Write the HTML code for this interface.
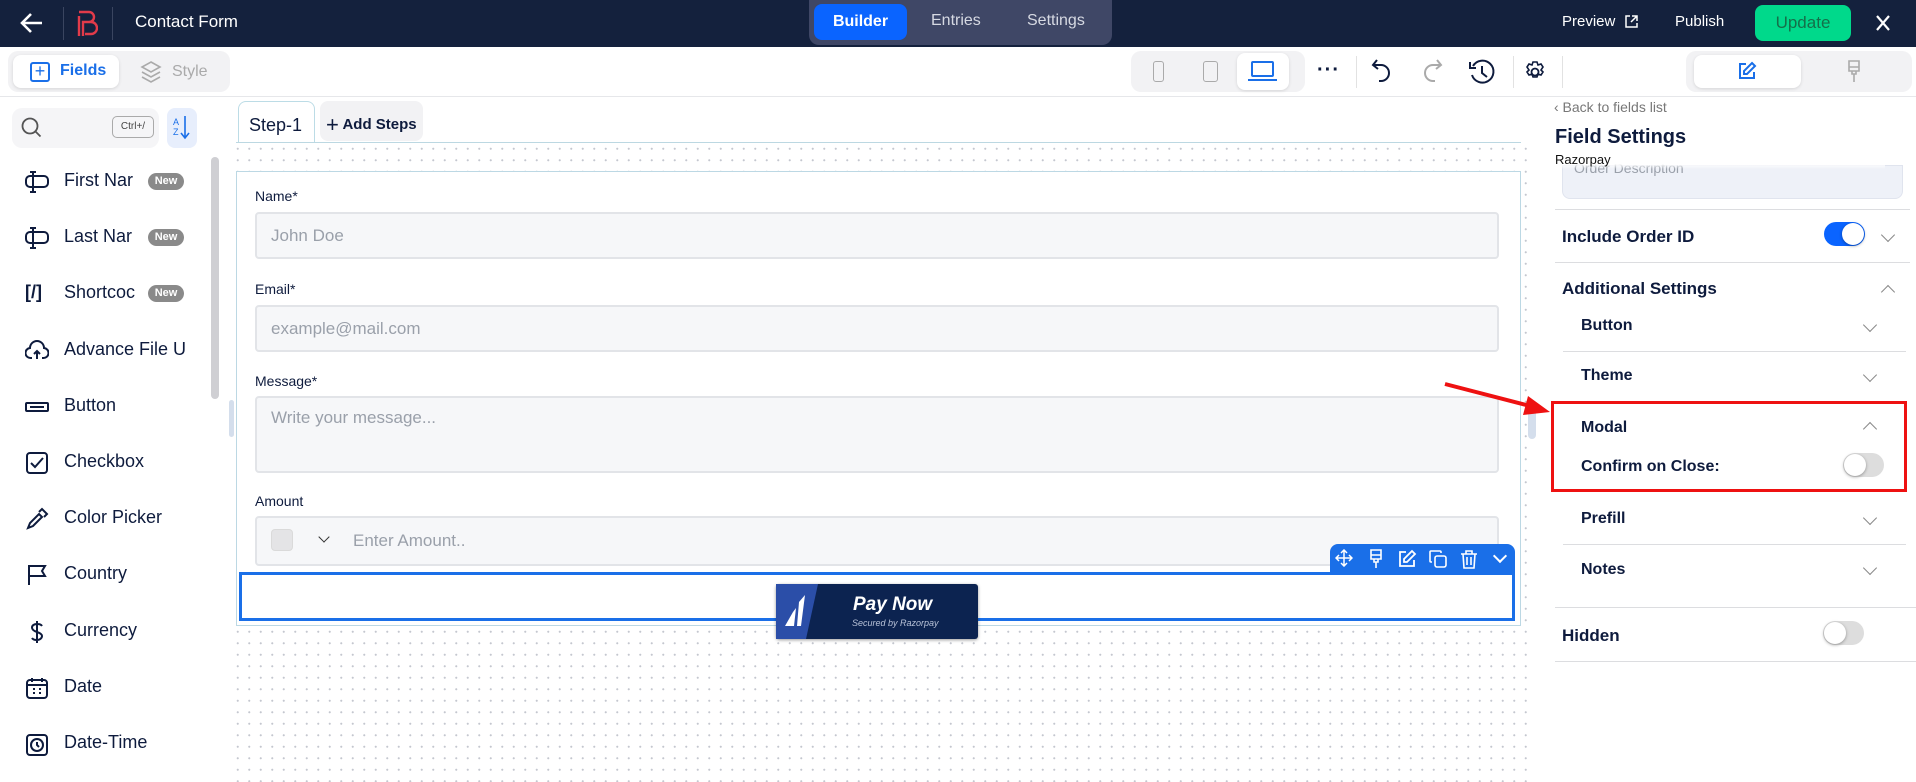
<!DOCTYPE html>
<html><head><meta charset="utf-8"><style>
*{box-sizing:border-box;margin:0;padding:0}
body{width:1916px;height:782px;overflow:hidden;background:#fff;font-family:"Liberation Sans",sans-serif;color:#0e1b3d;position:relative}
.a{position:absolute}
.top{left:0;top:0;width:1916px;height:47px;background:#14213d}
.w{color:#fff}
.li{position:absolute;left:0;width:220px;height:40px}
.li svg{position:absolute;left:25px;top:9px}
.li span{position:absolute;left:64px;top:9px;font-size:18px;color:#0e1b3d;white-space:nowrap}
.badge{position:absolute;left:148px;top:12px;width:36px;height:17px;border-radius:9px;background:#8a8a8a;color:#fff;font-size:11px;font-weight:bold;text-align:center;line-height:17px}
.lbl{position:absolute;left:255px;font-size:14px;color:#0e1b3d}
.inp{position:absolute;left:255px;width:1244px;background:#f6f7f9;border:2px solid #e2e4e8;border-radius:4px;font-size:17px;color:#9aa0aa;padding-left:14px}
.rs{position:absolute;font-size:16px;font-weight:bold;color:#0e1b3d}
.sep{position:absolute;height:1px;background:#dcdde0}
.chev{position:absolute;width:10px;height:10px;border-right:1.6px solid #888;border-bottom:1.6px solid #888;transform:rotate(45deg)}
.chevu{position:absolute;width:10px;height:10px;border-left:1.6px solid #888;border-top:1.6px solid #888;transform:rotate(45deg)}
.tog{position:absolute;width:41px;height:24px;border-radius:12px;background:#ddd}
.tog i{position:absolute;left:1px;top:1px;width:22px;height:22px;border-radius:50%;background:#fff;box-shadow:0 1px 3px rgba(0,0,0,.35)}
.ti{position:absolute;top:549px}
</style></head><body>
<div class="a top"></div>
<svg class="a" style="left:20px;top:12px" width="24" height="22" viewBox="0 0 24 22"><path d="M22 11H3M11 2L2 11l9 9" stroke="#fff" stroke-width="2.6" fill="none"/></svg>
<div class="a" style="left:63px;top:7px;width:1px;height:33px;background:#3a4560"></div>
<svg class="a" style="left:76px;top:10px" width="22" height="28" viewBox="0 0 22 28"><path d="M3 2h10a5 5 0 0 1 0 10H7v14M3 6v20M7 12h8a6 6 0 0 1 0 12H9" stroke="#e23b4a" stroke-width="2.4" fill="none"/></svg>
<div class="a" style="left:112px;top:7px;width:1px;height:33px;background:#3a4560"></div>
<div class="a w" style="left:135px;top:12px;font-size:17px">Contact Form</div>
<div class="a" style="left:809px;top:0;width:303px;height:45px;background:#3f4766;border-radius:0 0 10px 10px"></div>
<div class="a" style="left:814px;top:4px;width:93px;height:36px;background:#0a64ff;border-radius:8px;color:#fff;font-size:16px;font-weight:bold;text-align:center;line-height:36px">Builder</div>
<div class="a" style="left:931px;top:12px;font-size:16px;color:#d6d9e2">Entries</div>
<div class="a" style="left:1027px;top:12px;font-size:16px;color:#d6d9e2">Settings</div>
<div class="a w" style="left:1562px;top:13px;font-size:15px">Preview</div>
<svg class="a" style="left:1624px;top:14px" width="15" height="15" viewBox="0 0 15 15"><path d="M6 2H2v11h11V9M8 2h5v5M13 2L7 8" stroke="#fff" stroke-width="1.5" fill="none"/></svg>
<div class="a w" style="left:1675px;top:13px;font-size:15px">Publish</div>
<div class="a" style="left:1755px;top:5px;width:96px;height:36px;background:#00d98b;border-radius:8px;color:#14704a;font-size:17px;text-align:center;line-height:36px">Update</div>
<svg class="a" style="left:1875px;top:14px" width="16" height="18"><path d="M2 2l12 14M14 2L2 16" stroke="#fff" stroke-width="2.2"/></svg>

<div class="a" style="left:0;top:96px;width:1916px;height:1px;background:#e6e7ea"></div>
<div class="a" style="left:8px;top:51px;width:222px;height:41px;background:#f2f2f4;border-radius:10px"></div>
<div class="a" style="left:13px;top:55px;width:106px;height:33px;background:#fff;border-radius:8px;box-shadow:0 1px 3px rgba(0,0,0,.12)"></div>
<div class="a" style="left:30px;top:62px;width:20px;height:20px;border:2px solid #1a6fe8;border-radius:3px;color:#1a6fe8;font-size:18px;line-height:14px;text-align:center">+</div>
<div class="a" style="left:60px;top:62px;font-size:16px;color:#1a6fe8;font-weight:bold">Fields</div>
<svg class="a" style="left:140px;top:60px" width="22" height="24" viewBox="0 0 22 24"><path d="M11 2l9 5-9 5-9-5zM2 12l9 5 9-5M2 17l9 5 9-5" stroke="#aaa" stroke-width="1.6" fill="none"/></svg>
<div class="a" style="left:172px;top:63px;font-size:16px;color:#aaa">Style</div>

<div class="a" style="left:1131px;top:51px;width:174px;height:41px;background:#f2f2f4;border-radius:10px"></div>
<div class="a" style="left:1153px;top:61px;width:11px;height:21px;border:1.5px solid #aaa;border-radius:3px"></div>
<div class="a" style="left:1203px;top:61px;width:15px;height:21px;border:1.5px solid #aaa;border-radius:3px"></div>
<div class="a" style="left:1237px;top:53px;width:52px;height:37px;background:#fff;border-radius:8px;box-shadow:0 1px 3px rgba(0,0,0,.12)"></div>
<div class="a" style="left:1251px;top:61px;width:23px;height:16px;border:2px solid #1a6fe8;border-radius:2px"></div>
<div class="a" style="left:1248px;top:79px;width:29px;height:2px;background:#1a6fe8"></div>
<div class="a" style="left:1317px;top:59px;font-size:20px;font-weight:bold;color:#0e1b3d;letter-spacing:1px">···</div>
<div class="a" style="left:1356px;top:56px;width:1px;height:32px;background:#e2e2e2"></div>
<svg class="a" style="left:1371px;top:58px" width="22" height="28" viewBox="0 0 22 28"><path d="M6 2L2 7l5 4M2 7h8a8 8 0 0 1 0 16H8" stroke="#0e1b3d" stroke-width="2" fill="none"/></svg>
<svg class="a" style="left:1421px;top:58px" width="22" height="28" viewBox="0 0 22 28"><path d="M16 2l4 5-5 4M20 7h-8a8 8 0 0 0 0 16h2" stroke="#aaa" stroke-width="2" fill="none"/></svg>
<svg class="a" style="left:1468px;top:58px" width="28" height="28" viewBox="0 0 28 28"><path d="M5 8a11 11 0 1 1-1 9M2 4v6h6M14 8v7l5 4" stroke="#0e1b3d" stroke-width="2" fill="none"/></svg>
<div class="a" style="left:1513px;top:56px;width:1px;height:32px;background:#e2e2e2"></div>
<svg class="a" style="left:1523px;top:60px" width="24" height="24" viewBox="0 0 24 24"><circle cx="12" cy="12" r="3.5" stroke="#0e1b3d" stroke-width="1.8" fill="none"/><path d="M10 2h4l1 3 3-1 2 3-2 3 2 2-2 3-3-1-1 3h-4l-1-3-3 1-2-3 2-2-2-3 2-3 3 1z" stroke="#0e1b3d" stroke-width="1.6" fill="none"/></svg>
<div class="a" style="left:1562px;top:56px;width:1px;height:32px;background:#e2e2e2"></div>
<div class="a" style="left:1686px;top:51px;width:226px;height:41px;background:#f2f2f4;border-radius:10px"></div>
<div class="a" style="left:1694px;top:55px;width:107px;height:33px;background:#fff;border-radius:8px;box-shadow:0 1px 3px rgba(0,0,0,.12)"></div>
<svg class="a" style="left:1737px;top:61px" width="20" height="20" viewBox="0 0 20 20"><path d="M9 3H3v14h14v-6M15 2l3 3-8 8H7v-3z" stroke="#1a6fe8" stroke-width="2" fill="none"/></svg>
<svg class="a" style="left:1846px;top:59px" width="16" height="26" viewBox="0 0 16 26"><path d="M3 2h10v10H3zM3 8h10M6 12v3h4v-3M8 15v8" stroke="#aaa" stroke-width="1.6" fill="none"/></svg>

<div class="a" style="left:12px;top:108px;width:147px;height:40px;background:#f5f5f7;border-radius:10px"></div>
<svg class="a" style="left:20px;top:116px" width="24" height="24"><circle cx="10" cy="10" r="7.5" stroke="#555" stroke-width="1.8" fill="none"/><path d="M15.5 15.5l5 5" stroke="#555" stroke-width="1.8"/></svg>
<div class="a" style="left:112px;top:116px;width:42px;height:22px;border:1px solid #aaa;border-radius:5px;font-size:10px;text-align:center;line-height:20px;color:#444">Ctrl+/</div>
<div class="a" style="left:167px;top:108px;width:30px;height:40px;background:#e7eefc;border-radius:8px;color:#1a6fe8;font-size:9px;line-height:10px;padding:9px 0 0 6px">A<br>Z</div>
<svg class="a" style="left:180px;top:114px" width="10" height="28"><path d="M5 2v22M1 19l4 5 4-5" stroke="#1a6fe8" stroke-width="1.6" fill="none"/></svg>

<div class="li" style="top:161px"><svg width="24" height="24" viewBox="0 0 24 24"><rect x="1" y="6" width="22" height="11" rx="4" stroke="#0e1b3d" stroke-width="2" fill="none"/><path d="M8 2v20M5 2h6M5 22h6" stroke="#0e1b3d" stroke-width="2"/></svg><span>First Nar</span><div class="badge">New</div></div>
<div class="li" style="top:217px"><svg width="24" height="24" viewBox="0 0 24 24"><rect x="1" y="6" width="22" height="11" rx="4" stroke="#0e1b3d" stroke-width="2" fill="none"/><path d="M8 2v20M5 2h6M5 22h6" stroke="#0e1b3d" stroke-width="2"/></svg><span>Last Nar</span><div class="badge">New</div></div>
<div class="li" style="top:273px"><span style="left:25px;font-weight:bold">[/]</span><span>Shortcoc</span><div class="badge">New</div></div>
<div class="li" style="top:330px"><svg width="24" height="24" viewBox="0 0 24 24"><path d="M7 19H6a5 5 0 0 1-1-10 7 7 0 0 1 14 0 5 5 0 0 1-1 10h-1" stroke="#0e1b3d" stroke-width="2" fill="none"/><path d="M12 20v-8M9 15l3-3 3 3" stroke="#0e1b3d" stroke-width="2" fill="none"/></svg><span>Advance File U</span></div>
<div class="li" style="top:386px"><svg width="24" height="24" viewBox="0 0 24 24"><rect x="1" y="8" width="22" height="8" rx="1" stroke="#0e1b3d" stroke-width="2" fill="none"/><path d="M5 12h14" stroke="#0e1b3d" stroke-width="2"/></svg><span>Button</span></div>
<div class="li" style="top:442px"><svg width="24" height="24" viewBox="0 0 24 24"><rect x="2" y="2" width="20" height="20" rx="3" stroke="#0e1b3d" stroke-width="2" fill="none"/><path d="M6 12l4 4 8-9" stroke="#0e1b3d" stroke-width="2" fill="none"/></svg><span>Checkbox</span></div>
<div class="li" style="top:498px"><svg width="24" height="24" viewBox="0 0 24 24"><path d="M3 21l2-5 9-9 3 3-9 9zM14 5l3-3 5 5-3 3" stroke="#0e1b3d" stroke-width="2" fill="none"/></svg><span>Color Picker</span></div>
<div class="li" style="top:554px"><svg width="24" height="24" viewBox="0 0 24 24"><path d="M4 22V3h16l-3 5 3 5H4" stroke="#0e1b3d" stroke-width="2" fill="none"/></svg><span>Country</span></div>
<div class="li" style="top:611px"><svg width="24" height="24" viewBox="0 0 24 24"><path d="M12 1v22M17 6a5 3 0 0 0-5-2c-3 0-5 1.5-5 3.5S9 11 12 12s5 2 5 4-2 4-5 4a5 3 0 0 1-5-2" stroke="#0e1b3d" stroke-width="2" fill="none"/></svg><span>Currency</span></div>
<div class="li" style="top:667px"><svg width="24" height="24" viewBox="0 0 24 24"><rect x="2" y="4" width="20" height="18" rx="3" stroke="#0e1b3d" stroke-width="2" fill="none"/><path d="M2 9h20M7 2v4M17 2v4" stroke="#0e1b3d" stroke-width="2"/><path d="M8 13h2M14 13h2M8 17h2M14 17h2" stroke="#0e1b3d" stroke-width="2"/></svg><span>Date</span></div>
<div class="li" style="top:723px"><svg width="24" height="24" viewBox="0 0 24 24"><rect x="2" y="3" width="20" height="20" rx="3" stroke="#0e1b3d" stroke-width="2" fill="none"/><circle cx="12" cy="13" r="6" stroke="#0e1b3d" stroke-width="2" fill="none"/><path d="M12 10v3l2 2" stroke="#0e1b3d" stroke-width="2" fill="none"/></svg><span>Date-Time</span></div>
<div class="a" style="left:211px;top:157px;width:8px;height:242px;border-radius:4px;background:#cfcfd3"></div>
<div class="a" style="left:229px;top:400px;width:5px;height:37px;border-radius:3px;background:#d4deec"></div>

<div class="a" style="left:232px;top:143px;width:1296px;height:639px;background-image:radial-gradient(circle,#c4c7cf 0.9px,transparent 1.2px);background-size:11.5px 11.5px"></div>
<div class="a" style="left:238px;top:101px;width:77px;height:42px;border:1px solid #bcdce6;border-bottom:none;border-radius:8px 8px 0 0;background:#fff;font-size:18px;padding:13px 0 0 10px">Step-1</div>
<div class="a" style="left:320px;top:101px;width:103px;height:40px;background:#f2f2f4;border-radius:8px;font-size:15px;font-weight:bold;padding:11px 0 0 6px"><span style="font-size:22px;font-weight:normal;vertical-align:-3px">+</span> Add Steps</div>
<div class="a" style="left:236px;top:142px;width:1285px;height:1px;background:#bcd8e2"></div>
<div class="a" style="left:236px;top:171px;width:1285px;height:455px;border:1px solid #bcd8e4;background:#fff"></div>
<div class="lbl" style="top:188px">Name*</div>
<div class="inp" style="top:212px;height:47px;line-height:43px">John Doe</div>
<div class="lbl" style="top:281px">Email*</div>
<div class="inp" style="top:305px;height:47px;line-height:43px">example@mail.com</div>
<div class="lbl" style="top:373px">Message*</div>
<div class="inp" style="top:396px;height:77px;line-height:40px">Write your message...</div>
<div class="lbl" style="top:493px">Amount</div>
<div class="inp" style="top:516px;height:50px;line-height:46px;padding-left:96px">Enter Amount..</div>
<div class="a" style="left:271px;top:529px;width:22px;height:22px;border-radius:4px;background:#e4e4e6;border:1px solid #dadada"></div>
<div class="a" style="left:320px;top:533px;width:8px;height:8px;border-right:1.8px solid #333;border-bottom:1.8px solid #333;transform:rotate(45deg)"></div>
<div class="a" style="left:1330px;top:544px;width:185px;height:31px;background:#1a6fe8;border-radius:8px 8px 0 0"></div>
<svg class="ti" style="left:1335px" width="18" height="18" viewBox="0 0 18 18"><path d="M9 1v16M1 9h16M6 4l3-3 3 3M6 14l3 3 3-3M4 6L1 9l3 3M14 6l3 3-3 3" stroke="#fff" stroke-width="1.5" fill="none"/></svg>
<svg class="ti" style="left:1367px" width="18" height="20" viewBox="0 0 18 20"><path d="M4 1h10v9H4zM4 6h10M7 10v3h4v-3M9 13v6" stroke="#fff" stroke-width="1.6" fill="none"/></svg>
<svg class="ti" style="left:1397px" width="20" height="20" viewBox="0 0 20 20"><path d="M9 3H3v14h14v-6M15 2l3 3-8 8H7v-3z" stroke="#fff" stroke-width="1.8" fill="none"/></svg>
<svg class="ti" style="left:1428px" width="20" height="20" viewBox="0 0 20 20"><rect x="7" y="7" width="11" height="11" rx="2" stroke="#fff" stroke-width="1.6" fill="none"/><path d="M13 4V3a1 1 0 0 0-1-1H3a1 1 0 0 0-1 1v9a1 1 0 0 0 1 1h1" stroke="#fff" stroke-width="1.6" fill="none"/></svg>
<svg class="ti" style="left:1459px" width="20" height="20" viewBox="0 0 20 20"><path d="M2 5h16M7 5V2h6v3M4 5l1 14h10l1-14M8 8v8M12 8v8" stroke="#fff" stroke-width="1.6" fill="none"/></svg>
<div class="a" style="left:1495px;top:551px;width:10px;height:10px;border-right:2px solid #fff;border-bottom:2px solid #fff;transform:rotate(45deg)"></div>
<div class="a" style="left:239px;top:572px;width:1276px;height:49px;border:3px solid #1a6fe8;background:#fff"></div>
<div class="a" style="left:776px;top:584px;width:202px;height:55px;background:#0c2350;border-radius:3px;box-shadow:0 1px 3px rgba(0,0,0,.4);overflow:hidden"></div>
<svg class="a" style="left:776px;top:584px" width="50" height="55"><path d="M0 0h42L30 55H0z" fill="#2b4ea8"/><path d="M9 42l8-14 3-4-2 18zM21 42l2-24 6-7-4 31z" fill="#fff"/></svg>
<div class="a" style="left:853px;top:594px;color:#fff;font-size:19px;font-weight:bold;font-style:italic">Pay Now</div>
<div class="a" style="left:852px;top:618px;color:#b8c2d8;font-size:9px;font-style:italic">Secured by Razorpay</div>
<div class="a" style="left:1528px;top:401px;width:8px;height:38px;border-radius:4px;background:#d4deec"></div>

<div class="a" style="left:1554px;top:99px;font-size:14px;color:#777">‹ Back to fields list</div>
<div class="a" style="left:1555px;top:126px;font-size:20px;font-weight:bold">Field Settings</div>
<div class="a" style="left:1562px;top:165px;width:341px;height:34px;background:#eef1f8;border:1px solid #e0e4ee;border-radius:0 0 8px 8px;font-size:14px;color:#9aa0aa"><span style="position:relative;top:-6px;left:11px">Order Description</span></div>
<div class="a" style="left:1555px;top:152px;font-size:13px;color:#111;background:linear-gradient(#fff 70%,transparent);width:330px;height:17px">Razorpay</div>
<div class="sep" style="left:1555px;top:209px;width:355px"></div>
<div class="rs" style="left:1562px;top:227px;font-size:17px">Include Order ID</div>
<div class="tog" style="left:1824px;top:222px;background:#0a64ff"><i style="left:18px"></i></div>
<div class="chev" style="left:1883px;top:230px"></div>
<div class="sep" style="left:1555px;top:262px;width:355px"></div>
<div class="rs" style="left:1562px;top:279px;font-size:17px">Additional Settings</div>
<div class="chevu" style="left:1883px;top:287px"></div>
<div class="rs" style="left:1581px;top:317px">Button</div>
<div class="chev" style="left:1865px;top:320px"></div>
<div class="sep" style="left:1563px;top:351px;width:343px"></div>
<div class="rs" style="left:1581px;top:367px">Theme</div>
<div class="chev" style="left:1865px;top:370px"></div>
<div class="rs" style="left:1581px;top:419px">Modal</div>
<div class="chevu" style="left:1865px;top:424px"></div>
<div class="rs" style="left:1581px;top:458px">Confirm on Close:</div>
<div class="tog" style="left:1843px;top:453px"><i></i></div>
<div class="a" style="left:1551px;top:401px;width:356px;height:91px;border:3px solid #ee1111"></div>
<div class="rs" style="left:1581px;top:510px">Prefill</div>
<div class="chev" style="left:1865px;top:513px"></div>
<div class="sep" style="left:1563px;top:544px;width:343px"></div>
<div class="rs" style="left:1581px;top:561px">Notes</div>
<div class="chev" style="left:1865px;top:563px"></div>
<div class="sep" style="left:1555px;top:607px;width:361px"></div>
<div class="rs" style="left:1562px;top:626px;font-size:17px">Hidden</div>
<div class="tog" style="left:1823px;top:621px"><i></i></div>
<div class="sep" style="left:1555px;top:661px;width:361px"></div>

<svg class="a" style="left:1440px;top:378px" width="115" height="40"><path d="M5 6L94 29" stroke="#ee1111" stroke-width="4"/><path d="M110 34L88 18l-5 19z" fill="#ee1111"/></svg>
</body></html>
